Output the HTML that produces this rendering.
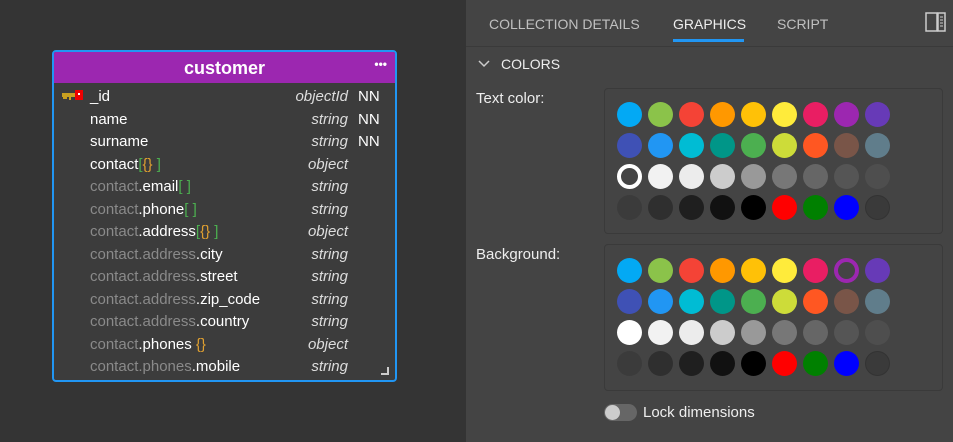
<!DOCTYPE html>
<html><head><meta charset="utf-8"><style>
*{box-sizing:border-box;margin:0;padding:0}
body{width:953px;height:442px;overflow:hidden;background:#343434;font-family:"Liberation Sans",sans-serif;position:relative}
.ent{position:absolute;left:52px;top:50px;width:345px;height:332px;border:2px solid #2196f3;border-radius:4px;background:#3c3c3c;overflow:hidden}
.hd{height:31px;background:#9c27b0;color:#fff;font-weight:bold;font-size:18px;text-align:center;line-height:33px;position:relative}
.hd span{position:absolute;right:8px;top:-4px;font-size:12px}
.row{position:absolute;left:0;width:341px;height:22px;font-size:15px;line-height:23px;color:#fff}
.row .n{position:absolute;left:36px;top:0}
.row .t{position:absolute;right:47px;top:0;font-style:italic;color:#ddd;font-size:15px;line-height:23px}
.row .k{position:absolute;left:304px;top:0}
.g{color:#8a8a8a}.gr{color:#4caf50}.o{color:#e0a030}
.panel{position:absolute;left:466px;top:0;width:487px;height:442px;background:#444}
.tabs{height:47px;border-bottom:1px solid #3a3a3a;position:relative;font-size:14px;color:#c0c0c0}
.tab{position:absolute;top:16px}
.lbl{position:absolute;color:#eee;font-size:15px}
.box{position:absolute;left:138px;width:339px;border:1px solid #3a3a3a;border-radius:4px}
.grid{position:absolute;left:151px;display:grid;grid-template-columns:repeat(9,25px);gap:6px}
.grid i{display:block;width:25px;height:25px;border-radius:50%}
</style></head><body>
<div class="ent">
<div class="hd">customer<span>•••</span></div>
<div class="row" style="top:33px"><svg style="position:absolute;left:8px;top:5px" width="22" height="12"><rect x="0" y="3" width="14" height="4" fill="#c9a020"/><rect x="1" y="3" width="4" height="6" fill="#c9a020"/><rect x="7" y="7" width="2" height="3" fill="#c9a020"/><rect x="13" y="0" width="8" height="10" fill="#e00"/><rect x="16" y="3" width="2" height="2" fill="#fff"/></svg><span class="n">_id</span><span class="t">objectId</span><span class="k">NN</span></div>
<div class="row" style="top:55.5px"><span class="n">name</span><span class="t">string</span><span class="k">NN</span></div>
<div class="row" style="top:78px"><span class="n">surname</span><span class="t">string</span><span class="k">NN</span></div>
<div class="row" style="top:100.5px"><span class="n">contact<span class="gr">[</span><span class="o">{}</span><span class="gr"> ]</span></span><span class="t">object</span></div>
<div class="row" style="top:123px"><span class="n"><span class="g">contact</span>.email<span class="gr">[ ]</span></span><span class="t">string</span></div>
<div class="row" style="top:145.5px"><span class="n"><span class="g">contact</span>.phone<span class="gr">[ ]</span></span><span class="t">string</span></div>
<div class="row" style="top:168px"><span class="n"><span class="g">contact</span>.address<span class="gr">[</span><span class="o">{}</span><span class="gr"> ]</span></span><span class="t">object</span></div>
<div class="row" style="top:190.5px"><span class="n"><span class="g">contact.address</span>.city</span><span class="t">string</span></div>
<div class="row" style="top:213px"><span class="n"><span class="g">contact.address</span>.street</span><span class="t">string</span></div>
<div class="row" style="top:235.5px"><span class="n"><span class="g">contact.address</span>.zip_code</span><span class="t">string</span></div>
<div class="row" style="top:258px"><span class="n"><span class="g">contact.address</span>.country</span><span class="t">string</span></div>
<div class="row" style="top:280.5px"><span class="n"><span class="g">contact</span>.phones <span class="o">{}</span></span><span class="t">object</span></div>
<div class="row" style="top:303px"><span class="n"><span class="g">contact.phones</span>.mobile</span><span class="t">string</span></div>
<div style="position:absolute;right:6px;bottom:5px;width:8px;height:8px;border-right:2px solid #ccc;border-bottom:2px solid #ccc"></div>
</div>
<div class="panel">
<div class="tabs">
<span class="tab" style="left:23px">COLLECTION DETAILS</span>
<span class="tab" style="left:207px;color:#eee">GRAPHICS</span>
<div style="position:absolute;left:207px;top:39px;width:71px;height:3px;background:#2196f3"></div>
<span class="tab" style="left:311px">SCRIPT</span>
<svg style="position:absolute;left:459px;top:12px" width="21" height="20"><rect x="1" y="1" width="11" height="18" fill="none" stroke="#ccc" stroke-width="1.5"/><rect x="13" y="1" width="7" height="18" fill="none" stroke="#ccc" stroke-width="1.5"/><g stroke="#ccc"><line x1="15" y1="5" x2="18" y2="5"/><line x1="15" y1="8" x2="18" y2="8"/><line x1="15" y1="11" x2="18" y2="11"/><line x1="15" y1="14" x2="18" y2="14"/></g></svg>
</div>
<svg style="position:absolute;left:12px;top:60px" width="12" height="8"><path d="M1 1l5 5 5-5" fill="none" stroke="#ccc" stroke-width="1.5"/></svg>
<span class="lbl" style="left:35px;top:56px;font-size:14px;color:#eee">COLORS</span>
<span class="lbl" style="left:10px;top:90px">Text color:</span>
<div class="box" style="top:88px;height:146px"></div>
<div class="grid" style="top:101.5px">
<i style="background:#03a9f4"></i><i style="background:#8bc34a"></i><i style="background:#f44336"></i><i style="background:#ff9800"></i><i style="background:#ffc107"></i><i style="background:#ffeb3b"></i><i style="background:#e91e63"></i><i style="background:#9c27b0"></i><i style="background:#673ab7"></i>
<i style="background:#3f51b5"></i><i style="background:#2196f3"></i><i style="background:#00bcd4"></i><i style="background:#009688"></i><i style="background:#4caf50"></i><i style="background:#cddc39"></i><i style="background:#ff5722"></i><i style="background:#795548"></i><i style="background:#607d8b"></i>
<i style="border:4px solid #fff"></i><i style="background:#f2f2f2"></i><i style="background:#ececec"></i><i style="background:#ccc"></i><i style="background:#999"></i><i style="background:#777"></i><i style="background:#666"></i><i style="background:#555"></i><i style="background:#4e4e4e"></i>
<i style="background:#3b3b3b"></i><i style="background:#2f2f2f"></i><i style="background:#1f1f1f"></i><i style="background:#111"></i><i style="background:#000"></i><i style="background:#f00"></i><i style="background:#008000"></i><i style="background:#00f"></i><i style="background:#3a3a3a;border:1px solid #333"></i>
</div>
<span class="lbl" style="left:10px;top:246px">Background:</span>
<div class="box" style="top:244px;height:147px"></div>
<div class="grid" style="top:257.5px">
<i style="background:#03a9f4"></i><i style="background:#8bc34a"></i><i style="background:#f44336"></i><i style="background:#ff9800"></i><i style="background:#ffc107"></i><i style="background:#ffeb3b"></i><i style="background:#e91e63"></i><i style="border:4px solid #9c27b0"></i><i style="background:#673ab7"></i>
<i style="background:#3f51b5"></i><i style="background:#2196f3"></i><i style="background:#00bcd4"></i><i style="background:#009688"></i><i style="background:#4caf50"></i><i style="background:#cddc39"></i><i style="background:#ff5722"></i><i style="background:#795548"></i><i style="background:#607d8b"></i>
<i style="background:#fff"></i><i style="background:#f2f2f2"></i><i style="background:#ececec"></i><i style="background:#ccc"></i><i style="background:#999"></i><i style="background:#777"></i><i style="background:#666"></i><i style="background:#555"></i><i style="background:#4e4e4e"></i>
<i style="background:#3b3b3b"></i><i style="background:#2f2f2f"></i><i style="background:#1f1f1f"></i><i style="background:#111"></i><i style="background:#000"></i><i style="background:#f00"></i><i style="background:#008000"></i><i style="background:#00f"></i><i style="background:#3a3a3a;border:1px solid #333"></i>
</div>
<div style="position:absolute;left:138px;top:404px;width:33px;height:17px;border-radius:9px;background:#666"></div>
<div style="position:absolute;left:139px;top:405px;width:15px;height:15px;border-radius:50%;background:#ccc"></div>
<span class="lbl" style="left:177px;top:404px">Lock dimensions</span>
</div>
</body></html>
